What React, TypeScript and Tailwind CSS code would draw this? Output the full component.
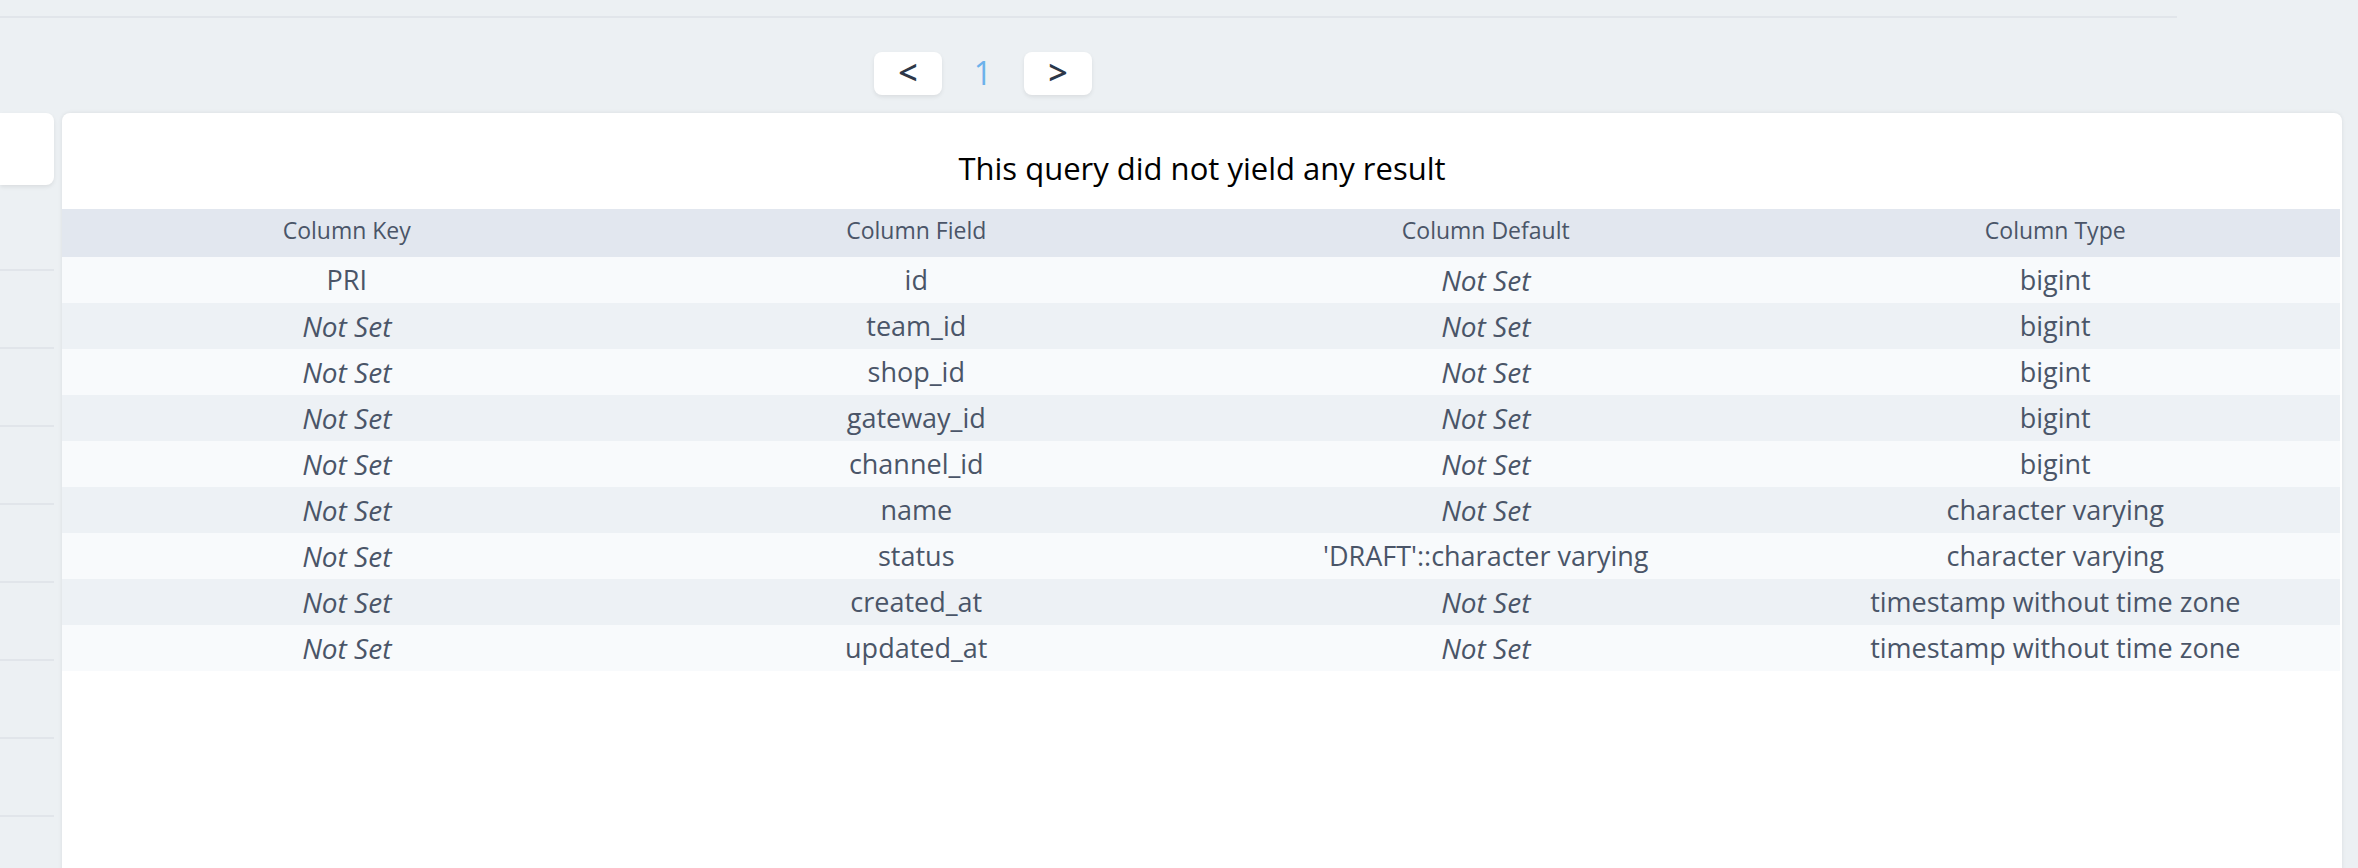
const COLUMNS = ["Column Key", "Column Field", "Column Default", "Column Type"];

// null renders as the italic "Not Set" placeholder
const ROWS: (string | null)[][] = [
  ["PRI", "id", null, "bigint"],
  [null, "team_id", null, "bigint"],
  [null, "shop_id", null, "bigint"],
  [null, "gateway_id", null, "bigint"],
  [null, "channel_id", null, "bigint"],
  [null, "name", null, "character varying"],
  [null, "status", "'DRAFT'::character varying", "character varying"],
  [null, "created_at", null, "timestamp without time zone"],
  [null, "updated_at", null, "timestamp without time zone"],
];

function Cell({ value }: { value: string | null }) {
  if (value === null) {
    return <span className="italic text-[28px]">Not Set</span>;
  }
  return <span>{value}</span>;
}

function Pagination() {
  return (
    <div className="flex items-center pl-[874px] mt-[34px]">
      <button className="w-[68px] h-[43px] bg-white rounded-lg shadow-[0_2px_4px_rgba(0,0,0,0.08)] text-[34px] font-semibold leading-none text-[#2d3748] flex items-center justify-center pb-[3px]">
        &lt;
      </button>
      <span className="w-[82px] text-center text-[32px] leading-none text-[#6cb2eb] pb-[2px]">1</span>
      <button className="w-[68px] h-[43px] bg-white rounded-lg shadow-[0_2px_4px_rgba(0,0,0,0.08)] text-[34px] font-semibold leading-none text-[#2d3748] flex items-center justify-center pb-[3px]">
        &gt;
      </button>
    </div>
  );
}

function Sidebar() {
  return (
    <div className="w-[54px] shrink-0 flex flex-col">
      <div className="h-[72px] bg-white rounded-r-lg shadow-[0_2px_4px_rgba(0,0,0,0.08)]" />
      <div className="mt-[8px] flex flex-col">
        {Array.from({ length: 8 }).map((_, i) => (
          <div key={i} className="h-[78px] border-b-2 border-[#e1e5ea]" />
        ))}
      </div>
    </div>
  );
}

function ResultCard() {
  return (
    <div className="flex-1 ml-[8px] mr-[16px] bg-white rounded-t-lg shadow-[0_0_4px_rgba(0,0,0,0.08)] h-[780px]">
      <div className="h-[96px] pt-[14px] flex items-center justify-center text-[31px] text-black">
        This query did not yield any result
      </div>
      <div className="mr-[2px] text-[#4a5568]">
        <div className="grid grid-cols-4 h-[48px] pb-[6px] items-center bg-[#e2e7ef] text-[23px]">
          {COLUMNS.map((c) => (
            <div key={c} className="text-center">
              {c}
            </div>
          ))}
        </div>
        {ROWS.map((row, i) => (
          <div
            key={i}
            className={
              "grid grid-cols-4 h-[46px] items-center text-[27px] " +
              (i % 2 === 0 ? "bg-[#f8fafc]" : "bg-[#edf1f5]")
            }
          >
            {row.map((v, j) => (
              <div key={j} className="text-center whitespace-nowrap">
                <Cell value={v} />
              </div>
            ))}
          </div>
        ))}
      </div>
    </div>
  );
}

export default function App() {
  return (
    <div
      className="w-[2358px] h-[868px] overflow-hidden bg-[#ecf0f3]"
      style={{ fontFamily: '"Open Sans", sans-serif' }}
    >
      <div className="pt-[16px]">
        <div className="w-[2177px] h-[2px] bg-[#e1e5ea]" />
      </div>
      <Pagination />
      <div className="flex mt-[18px]">
        <Sidebar />
        <ResultCard />
      </div>
    </div>
  );
}
